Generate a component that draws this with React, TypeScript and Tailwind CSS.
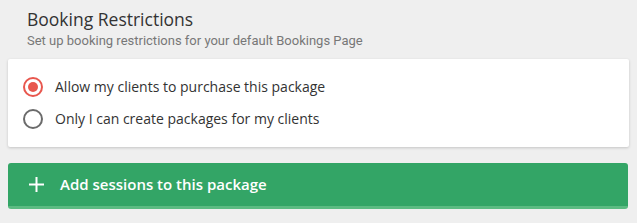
import React from "react";

export default function App() {
  return (
    <div className="w-[637px] h-[223px] bg-[#efefef] overflow-hidden">
      <div className="pl-[27px] pt-[8px]">
        <h2 className="text-[17.5px] leading-[22px] font-medium text-[#333] font-['Open_Sans',sans-serif]">Booking Restrictions</h2>
        <p className="mt-[3px] text-[13px] leading-[16px] text-[#777] font-['Roboto',sans-serif]">Set up booking restrictions for your default Bookings Page</p>
      </div>
      <div className="mx-2 mt-[10px] h-[88px] bg-white rounded-[2px] shadow-[0_1px_3px_rgba(0,0,0,0.18)] flex flex-col justify-center gap-[12px] pl-[15px]">
        <label className="flex items-center gap-[12px]">
          <span className="w-[20px] h-[20px] rounded-full border-2 border-[#e8574e] flex items-center justify-center">
            <span className="w-[10px] h-[10px] rounded-full bg-[#e8574e]" />
          </span>
          <span className="text-[14px] leading-[20px] text-[#333] font-['Open_Sans',sans-serif]">Allow my clients to purchase this package</span>
        </label>
        <label className="flex items-center gap-[12px]">
          <span className="w-[20px] h-[20px] rounded-full border-2 border-[#6b6b6b]" />
          <span className="text-[14px] leading-[20px] text-[#333] font-['Open_Sans',sans-serif]">Only I can create packages for my clients</span>
        </label>
      </div>
      <button className="mx-2 mt-[16px] w-[620px] h-[46px] bg-[#33a566] rounded-[3px] border-b-[3px] border-[#5cbb82] flex items-center pl-[21px] gap-[16px] text-white">
        <svg width="15" height="15" viewBox="0 0 15 15" className="shrink-0">
          <path d="M7.5 0v15M0 7.5h15" stroke="white" strokeWidth="2" />
        </svg>
        <span className="text-[15px] font-semibold font-['Open_Sans',sans-serif]">Add sessions to this package</span>
      </button>
    </div>
  );
}
